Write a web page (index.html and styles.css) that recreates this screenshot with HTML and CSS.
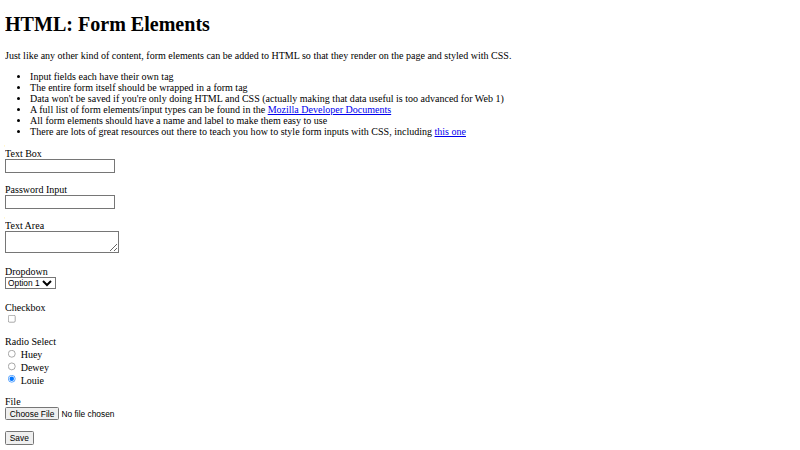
FILE: index.html
```html
<!DOCTYPE html>
<html lang="en">
<head>
    <meta charset="UTF-8">
    <meta name="viewport" content="width=device-width, initial-scale=1.0">
    <title>HTML: Form Elements</title>
    <link rel="stylesheet" href="styles.css">
</head>
<body>
    <h1>HTML: Form Elements</h1>
    <p>Just like any other kind of content, form elements can be added to HTML so that they render on the page and styled with CSS.</p>
    <ul>
        <li>Input fields each have their own tag</li>
        <li>The entire form itself should be wrapped in a form tag</li>
        <li>Data won't be saved if you're only doing HTML and CSS (actually making that data useful is too advanced for Web 1)</li>
        <li>A full list of form elements/input types can be found in the <a href="#">Mozilla Developer Documents</a></li>
        <li>All form elements should have a name and label to make them easy to use</li>
        <li>There are lots of great resources out there to teach you how to style form inputs with CSS, including <a href="#">this one</a></li>
    </ul>

    <form>
        <label for="textbox">Text Box</label><br>
        <input type="text" class="field" id="textbox" name="textbox"><br><br>

        <label for="password">Password Input</label><br>
        <input type="password" class="field" id="password" name="password"><br><br>

        <label for="textarea">Text Area</label><br>
        <textarea id="textarea" name="textarea"></textarea><br><br>

        <label for="dropdown">Dropdown</label><br>
        <select class="dropdown" id="dropdown" name="dropdown">
            <option>Option 1</option>
            <option>Option 2</option>
            <option>Option 3</option>
        </select><br><br>

        <label for="checkbox">Checkbox</label><br>
        <input type="checkbox" class="check" id="checkbox" name="checkbox"><br><br>

        <span>Radio Select</span><br>
        <input type="radio" class="radio" id="huey" name="nephew" value="huey">
        <label for="huey">Huey</label><br>
        <input type="radio" class="radio" id="dewey" name="nephew" value="dewey">
        <label for="dewey">Dewey</label><br>
        <input type="radio" class="radio" id="louie" name="nephew" value="louie" checked>
        <label for="louie">Louie</label><br><br>

        <label for="file">File</label><br>
        <input type="file" id="file" name="file"><br><br>

        <button type="submit">Save</button>
    </form>
</body>
</html>
```

FILE: styles.css
```css
html {
    zoom: 0.627;
}
body {
    font-family: "Liberation Serif", "Times New Roman", serif;
    color: #000;
}
h1 {
    margin-top: 13px;
}
ul {
    margin-bottom: 18px;
}
input,
select,
textarea,
button {
    font-family: "Liberation Sans", Arial, sans-serif;
}
.field {
    box-sizing: border-box;
    width: 176px;
    padding-top: 1.5px;
    padding-bottom: 1.5px;
}
textarea {
    box-sizing: border-box;
    width: 181px;
    height: 36px;
}
.dropdown {
    margin-bottom: 3px;
}
.check {
    margin-bottom: 3.5px;
}
.radio {
    margin-top: 4px;
    margin-bottom: 1px;
}
```
